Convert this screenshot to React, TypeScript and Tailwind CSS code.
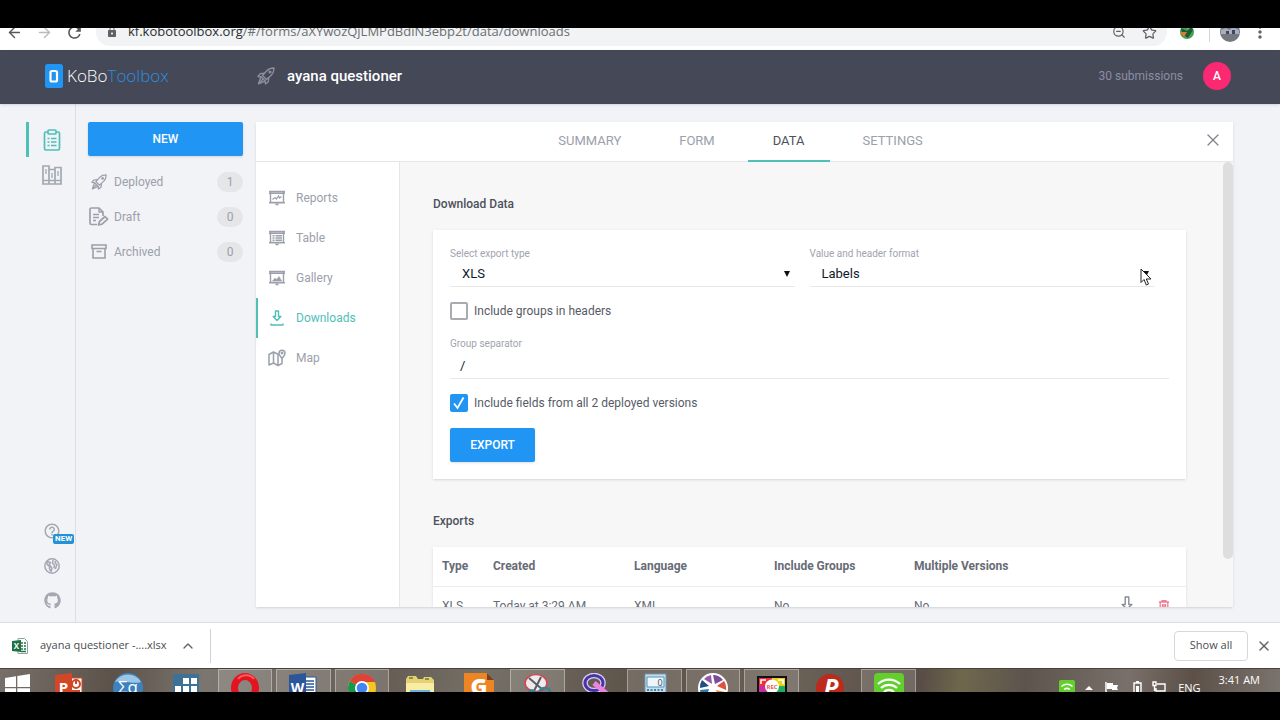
import type { ReactNode } from 'react';
import { ArrowLeft, ArrowRight, ChevronUp, Star, X, ZoomOut } from 'lucide-react';
import { FaGithub } from 'react-icons/fa';
import { MdHelpOutline, MdLock, MdMoreVert, MdRefresh } from 'react-icons/md';

const RocketIcon = ({ className = '' }: { className?: string }) => (
  <svg viewBox="0 0 18 18" className={className} fill="none" stroke="currentColor" strokeWidth="1.400" strokeLinejoin="round">
    <path d="M17 1c-3.500 0-5.500 1-7 2.500L5.500 8.500l4 4 5-4.500C16 6.500 17 4.500 17 1z" />
    <path d="M7.500 6.200L3 6.800 1 9.500l3 .3-2.500 7L8.200 14l.3 3 2.700-2 .6-4.500" />
    <path d="M4 9.800L8.200 14M1.500 16.800l4.200-4.300" />
    <circle cx="13" cy="5" r=".9" />
  </svg>
);

const ClipboardIcon = () => (
  <svg viewBox="0 0 18 22" className="w-[18px] h-[22px]" fill="none" stroke="currentColor" strokeWidth="1.700">
    <rect x="1.500" y="3" width="15" height="18" rx="1.500" />
    <rect x="5" y="1" width="8" height="4" rx="1" fill="#f2f3f6" />
    <path d="M4.500 9.500h2M8 9.500h5.500M4.500 13h2M8 13h5.500M4.500 16.500h2M8 16.500h5.500" />
  </svg>
);

const LibraryIcon = () => (
  <svg viewBox="0 0 20 20" className="w-5 h-5" fill="none" stroke="currentColor" strokeWidth="1.700">
    <path d="M1 1h6v18H1zM7 4.500h6V19H7zM13 2.500h6V19h-6z" />
    <path d="M4 4v5M10 8v5M16 6v5M1 15.500h18" strokeWidth="1.300" />
  </svg>
);

const DraftIcon = () => (
  <svg viewBox="0 0 20 19" className="w-5 h-[19px]" fill="none" stroke="currentColor" strokeWidth="1.700" strokeLinejoin="round">
    <path d="M8 17.500H2.500c-.8 0-1.500-.6-1.500-1.500V2.500C1 1.600 1.600 1 2.500 1H10l4 4v4" />
    <path d="M10 1v4h4M4 7.500h6M4 10.500h6M4 13.500h3" strokeWidth="1.400" />
    <path d="M9.500 18l1-3.500 5.500-5 2.600 2.600-5.600 5z" />
  </svg>
);

const ArchiveIcon = () => (
  <svg viewBox="0 0 16 15" className="w-4 h-[15px]" fill="none" stroke="currentColor" strokeWidth="1.600">
    <path d="M1 1h14v3.500H1zM2 4.500V14h12V4.500M5.500 7.500h5" />
  </svg>
);

const BoardIcon = ({ children }: { children: ReactNode }) => (
  <svg viewBox="0 0 16 16" className="w-4 h-4" fill="none" stroke="currentColor" strokeWidth="1.400">
    <path d="M0 1.500h16M0 3.200h16" strokeWidth="1.500" />
    <path d="M1.500 2v10.500h13V2M0 12.700h16M6.500 14.500h3" />
    {children}
  </svg>
);

const DownloadIcon = () => (
  <svg viewBox="0 0 14 17" className="w-[14px] h-[17px]" fill="none" stroke="currentColor" strokeWidth="1.400" strokeLinejoin="round">
    <path d="M5.500 1h3v5.500h2.300L7 10.500 3.200 6.500h2.300z" />
    <path d="M1 13.500V15h12v-1.500" />
  </svg>
);

const MapIcon = () => (
  <svg viewBox="0 0 18 18" className="w-[18px] h-[18px]" fill="none" stroke="currentColor" strokeWidth="1.500" strokeLinejoin="round">
    <path d="M10.500 4.500L9.500 5 5.500 3 1 5.500V16l4.500-2 4.500 2.500 4-2V10M5.500 3v11M10 5v11" />
    <path d="M14 9.500c-1.600-2.200-3-3.600-3-5.300a3 3 0 016 0c0 1.700-1.400 3.100-3 5.300z" fill="white" />
    <circle cx="14" cy="4" r=".7" />
  </svg>
);

const GlobeIcon = () => (
  <svg viewBox="0 0 16 16" className="w-4 h-4" fill="none" stroke="currentColor" strokeWidth="1.500" strokeLinejoin="round">
    <circle cx="8" cy="8" r="7.200" />
    <path d="M3 3.500v3l2.500 2V11L7 13.500l1-3L6.500 8 5 6.500l1.500-2zM9 2l-.5 3.500 2 1.500-.5 2.500 1.500 1 1.500-4-2-1.500.5-2" />
  </svg>
);

const ExcelIcon = () => (
  <svg viewBox="0 0 16 16" className="w-4 h-4">
    <path d="M6 .5h6.500l3 3V15.500H6z" fill="#fff" stroke="#8aa898" />
    <path d="M9 5h2M12 5h2M9 8h2M12 8h2M9 11h2M12 11h2M9 13.500h5" stroke="#227447" strokeWidth="1.300" />
    <path d="M0 3l9-1v12l-9-1z" fill="#1e7145" />
    <text x="4.500" y="11" textAnchor="middle" fontSize="8" fontWeight="700" fill="#fff">X</text>
  </svg>
);

const railLinks = [
  { name: 'Projects', icon: <ClipboardIcon />, active: true },
  { name: 'Library', icon: <LibraryIcon />, active: false }
];

const formGroups = [
  { name: 'Deployed', count: 1, icon: <RocketIcon className="w-4 h-4" /> },
  { name: 'Draft', count: 0, icon: <DraftIcon /> },
  { name: 'Archived', count: 0, icon: <ArchiveIcon /> }
];

const tabs = ['SUMMARY', 'FORM', 'DATA', 'SETTINGS'];

const dataViews = [
  {
    name: 'Reports',
    icon: <BoardIcon><path d="M3.500 9.500L6 7.500l1.500 1.500L9.500 6l1 2 2-1.500" strokeWidth="1.200" /></BoardIcon>
  },
  {
    name: 'Table',
    icon: <BoardIcon><path d="M3.500 5.700h2M6.500 5.700h6.500M3.500 8h2M6.500 8h6.500M3.500 10.300h2M6.500 10.300h6.500" /></BoardIcon>
  },
  {
    name: 'Gallery',
    icon: <BoardIcon><path d="M3.500 11l2.500-3 1.500 1.500L10 6.500l2.800 4.500z" fill="currentColor" strokeWidth=".5" /></BoardIcon>
  },
  { name: 'Downloads', icon: <DownloadIcon /> },
  { name: 'Map', icon: <MapIcon /> }
];

const taskbarApps: { name: string; open: boolean; icon: ReactNode }[] = [
  {
    name: 'PowerPoint',
    open: false,
    icon: (
      <>
        <path d="M14 5h14v20H14z" fill="#fff" stroke="#d24726" />
        <circle cx="22" cy="11" r="4" fill="none" stroke="#d24726" strokeWidth="2" />
        <path d="M22 11V6M17 18h9M17 21h9" stroke="#d24726" strokeWidth="2" />
        <path d="M1 2l17-2v30L1 28z" fill="#d24726" />
        <text x="9.500" y="20" textAnchor="middle" fontSize="15" fontWeight="700" fill="#fff">P</text>
      </>
    )
  },
  {
    name: 'Statistics',
    open: false,
    icon: (
      <>
        <circle cx="15" cy="15" r="15" fill="#3d82bd" />
        <path d="M2 9a15 15 0 0126 0C20 12 10 6 2 9z" fill="#9cc6e6" />
        <text x="15" y="20" textAnchor="middle" fontSize="17" fill="#fff">Σα</text>
      </>
    )
  },
  {
    name: 'Metro apps',
    open: false,
    icon: (
      <>
        <path d="M2 1h26v28H2z" fill="#3e7196" />
        <path d="M12 5h6v6h-6zM20 5h6v6h-6zM4 13h6v6H4zM12 13h6v6h-6zM20 13h6v6h-6z" fill="#fff" />
      </>
    )
  },
  {
    name: 'Opera',
    open: true,
    icon: (
      <>
        <ellipse cx="15" cy="15" rx="10.500" ry="11.500" fill="none" stroke="#e3131f" strokeWidth="7" />
        <path d="M8 6c4-5 12-5 16 0" fill="none" stroke="#ff5a60" strokeWidth="2" />
      </>
    )
  },
  {
    name: 'Word',
    open: true,
    icon: (
      <>
        <path d="M14 4h14v22H14z" fill="#fff" stroke="#2b579a" />
        <path d="M17 8h9M17 11h9M17 14h9M17 17h9M17 20h9" stroke="#2b579a" strokeWidth="1.500" />
        <path d="M1 2l17-2v30L1 28z" fill="#2b579a" />
        <text x="9.500" y="20" textAnchor="middle" fontSize="14" fontWeight="700" fill="#fff">W</text>
      </>
    )
  },
  {
    name: 'Chrome',
    open: true,
    icon: (
      <>
        <circle cx="15" cy="15" r="14" fill="#f6c522" />
        <path d="M15 15L2.900 8A14 14 0 0014 29z" fill="#17984f" />
        <path d="M2.900 8A14 14 0 0128 9H15v6z" fill="#db4437" />
        <circle cx="15" cy="15" r="7" fill="#fff" />
        <circle cx="15" cy="15" r="5.300" fill="#4285f4" />
      </>
    )
  },
  {
    name: 'Explorer',
    open: false,
    icon: (
      <>
        <path d="M1 6l2-3h8l2 3h5l1-2h7l3 3v22H1z" fill="#e7cf73" />
        <path d="M1 10h28v18H1z" fill="#f7eda5" />
        <path d="M4 5h4M20 6h4" stroke="#4b8a3c" strokeWidth="1.500" />
        <path d="M5 17h20v10H5z" fill="#69b4dc" />
      </>
    )
  },
  {
    name: 'Foxit Reader',
    open: false,
    icon: (
      <>
        <path d="M0 0h23l7 7v23H0z" fill="#ee8523" />
        <path d="M23 0l7 7h-7z" fill="#74412a" />
        <text x="15" y="22" textAnchor="middle" fontSize="23" fontWeight="900" fill="#fff">G</text>
      </>
    )
  },
  {
    name: 'Snipping Tool',
    open: true,
    icon: (
      <>
        <ellipse cx="13" cy="10" rx="11" ry="8.500" fill="#efe9eb" stroke="#ce4b54" strokeWidth="1.700" />
        <path d="M6 5l14 12M18 4l-8 16" stroke="#565d66" strokeWidth="2" />
        <ellipse cx="22" cy="18" rx="5" ry="3" fill="none" stroke="#3c8093" strokeWidth="2.500" />
        <circle cx="9" cy="21" r="3.500" fill="none" stroke="#3c8093" strokeWidth="2.500" />
      </>
    )
  },
  {
    name: 'Q viewer',
    open: false,
    icon: (
      <>
        <ellipse cx="13" cy="10" rx="9" ry="7.500" fill="none" stroke="#d9cef3" strokeWidth="5.500" />
        <ellipse cx="13" cy="10" rx="9" ry="7.500" fill="none" stroke="#4a35a8" strokeWidth="3" />
        <path d="M13 10l13 11" stroke="#ec83e0" strokeWidth="5" />
      </>
    )
  },
  {
    name: 'Calculator',
    open: true,
    icon: (
      <>
        <path d="M5 1h21v29H5z" fill="#c4deec" stroke="#6d9bb8" />
        <path d="M7 4h17v10H7z" fill="#edf6fb" stroke="#5a91b5" />
        <text x="20" y="13" textAnchor="middle" fontSize="9" fill="#334e63">0</text>
        <path d="M7 17h17M7 21h17" stroke="#4b81a6" strokeWidth="2" strokeDasharray="2 1.500" />
      </>
    )
  },
  {
    name: 'Photo viewer',
    open: true,
    icon: (
      <>
        <circle cx="15" cy="15" r="15" fill="#fff" />
        <path d="M15 2A13 13 0 0125 7l-8 4z" fill="#7b4b9e" />
        <path d="M26 8a13 13 0 012 9l-9-4z" fill="#d95340" />
        <path d="M13 2l1 9-8-5A13 13 0 0113 2z" fill="#955aa4" />
        <path d="M4 7l7 6-9 2A13 13 0 014 7z" fill="#234f80" />
        <path d="M2 17l9-1-3 10A13 13 0 012 17z" fill="#2e7dab" />
        <path d="M27 19l-9-2 3 9A13 13 0 0027 19z" fill="#e6903b" />
        <path d="M10 27l5-8 4 8A13 13 0 0110 27z" fill="#3c9e67" />
      </>
    )
  },
  {
    name: 'Screen recorder',
    open: true,
    icon: (
      <>
        <path d="M0 3h30v25H0z" fill="#111" />
        <path d="M2 5h13v8H2z" fill="#ec2e3f" />
        <path d="M15 5h13v8H15z" fill="#e8d21d" />
        <path d="M2 13h13v13H2z" fill="#c72da1" />
        <path d="M15 13h13v13H15z" fill="#1fae5e" />
        <path d="M4 11V7h5M21 7h5v4" fill="none" stroke="#fff" strokeWidth="1.500" />
        <circle cx="15" cy="13.500" r="7" fill="#fff" />
        <text x="15" y="16" textAnchor="middle" fontSize="6" fontWeight="700" fill="#e0604f">REC</text>
      </>
    )
  },
  {
    name: 'Psiphon',
    open: false,
    icon: (
      <>
        <circle cx="15" cy="15" r="14" fill="#bd2a1d" />
        <text x="16" y="23" textAnchor="middle" fontSize="24" fontWeight="700" fontStyle="italic" fill="#fff">P</text>
      </>
    )
  },
  {
    name: 'Wifi hotspot',
    open: true,
    icon: (
      <>
        <rect width="30" height="30" rx="4" fill="#62cf2c" />
        <path d="M4 11a16 16 0 0122 0M7 15a12 12 0 0116 0M10 19a7 7 0 0110 0" fill="none" stroke="#fff" strokeWidth="2.300" />
      </>
    )
  }
];

const BrowserToolbar = () => (
  <div className="h-[22px] shrink-0 overflow-hidden bg-white flex items-end font-['Open_Sans','Noto_Sans',sans-serif]">
    <div className="h-9 flex-1 shrink-0 flex items-center">
      <button aria-label="Back" className="ml-1.5 text-[#55585c]"><ArrowLeft size={17} /></button>
      <button aria-label="Forward" className="ml-[13px] text-[#b9bbbe]"><ArrowRight size={17} /></button>
      <button aria-label="Reload" className="ml-3 text-[#55585c]"><MdRefresh size={19} /></button>
      <div className="ml-3 flex-1 h-7 rounded-full bg-[#f1f3f4] flex items-center pl-2.5 pr-2.5">
        <MdLock size={12} className="text-[#5f6368]" />
        <span className="ml-2.5 text-[13px] text-[#6b6e72] whitespace-nowrap">
          <span className="text-[#2b2d30]">kf.kobotoolbox.org</span>/#/forms/aXYwozQjLMPdBdiN3ebp2t/data/downloads
        </span>
        <button aria-label="Zoom" className="ml-auto text-[#5f6368]"><ZoomOut size={14} /></button>
        <button aria-label="Bookmark" className="ml-4 text-[#5f6368]"><Star size={15} /></button>
      </div>
      <svg viewBox="0 0 16 16" className="ml-3 w-4 h-4">
        <circle cx="8" cy="8" r="7" fill="#4aa34a" />
        <path d="M2 4l6 3 4-5 2 4-5 8-6-4z" fill="#1c5c39" />
        <path d="M1 8h7l-3 5z" fill="#de7b30" />
        <path d="M8 2h4L9 6z" fill="#78b2e5" />
      </svg>
      <div className="ml-3.5 w-px h-5 bg-gray-300"></div>
      <svg viewBox="0 0 20 20" className="ml-2.5 w-5 h-5">
        <circle cx="10" cy="10" r="10" fill="#75797f" />
        <path d="M1 8l5-2 3 2 4-3 6 3v4H1z" fill="#a8aec0" />
        <path d="M6 9h3v3H6zM12 8h3v4h-3z" fill="#3f4660" />
      </svg>
      <button aria-label="Menu" className="ml-2.5 mr-2.5 text-[#5f6368]"><MdMoreVert size={20} /></button>
    </div>
  </div>
);

const AppHeader = () => (
  <header className="relative z-10 h-[54px] shrink-0 bg-[#444857] flex items-center pb-0.5 shadow">
    <a href="#/" aria-label="KoBoToolbox" className="ml-[45px] w-[212px] flex items-center">
      <svg viewBox="0 0 18 24" className="w-[18px] h-6">
        <rect width="18" height="24" rx="2.500" fill="#2095f3" />
        <rect x="5.500" y="7" width="6.500" height="10.500" rx="1.500" fill="none" stroke="#fff" strokeWidth="2.200" />
      </svg>
      <span className="ml-1 text-[17px] font-['Open_Sans','Noto_Sans',sans-serif] font-light text-white">
        KoBo<span className="text-[#2b8fe0]">Toolbox</span>
      </span>
    </a>
    <RocketIcon className="w-[18px] h-[18px] text-[#8a8e9e]" />
    <h1 className="ml-3 text-[15px] leading-5 font-medium text-white">ayana questioner</h1>
    <span className="ml-auto text-xs text-[#8b8fa3]">30 submissions</span>
    <button className="ml-5 mr-[49px] size-7 rounded-full bg-[#fc2872] text-white text-xs font-medium">A</button>
  </header>
);

const IconRail = () => (
  <nav className="w-[76px] shrink-0 border-r border-[#dcdee3] flex flex-col pt-[18px] pb-[13px] text-[#a3a8b3]">
    {railLinks.map((link) => (
      <a
        key={link.name}
        href="#/"
        aria-label={link.name}
        className={`ml-[26px] h-[35px] flex items-center justify-center border-l-[3px] ${link.active ? 'border-[#4fc0b8] text-[#4fc0b8]' : 'border-transparent'}`}
      >
        {link.icon}
      </a>
    ))}
    <div className="mt-auto ml-[43px] flex flex-col items-start gap-[18px]">
      <button aria-label="Help" className="relative">
        <MdHelpOutline size={18} />
        <span className="absolute left-2.5 top-3 px-0.5 bg-[#2391d3] rounded-xs text-white text-[8px] leading-[10px] font-bold">NEW</span>
      </button>
      <a href="#/source" aria-label="Website" className="ml-px"><GlobeIcon /></a>
      <a href="#/github" aria-label="GitHub" className="ml-px"><FaGithub size={17} /></a>
    </div>
  </nav>
);

const FormsSidebar = () => (
  <aside className="w-[180px] shrink-0 pl-3 pr-[13px] pt-[18px] text-xs text-[#9ba0ab]">
    <button className="w-full h-[34px] rounded-xs bg-[#2095f3] shadow text-white text-xs font-medium">NEW</button>
    <ul className="mt-2">
      {formGroups.map((group) => (
        <li key={group.name} className="h-[35px] flex items-center">
          <span className="w-[22px] flex justify-center">{group.icon}</span>
          <span className="ml-1">{group.name}</span>
          <span className="ml-auto w-[26px] h-5 rounded-full bg-[#e5e6e8] flex items-center justify-center">{group.count}</span>
        </li>
      ))}
    </ul>
  </aside>
);

const SelectField = ({ id, label, value }: { id: string; label: string; value: string }) => (
  <div className="w-1/2 pr-[15px]">
    <label htmlFor={id} className="block text-[10px] leading-4 text-[#a0a4ae]">{label}</label>
    <div className="relative">
      <select id={id} className="appearance-none block w-full h-[25px] pl-3 border-b border-[#e8e8ea] bg-transparent text-[13px] text-gray-900 outline-none">
        <option>{value}</option>
      </select>
      <svg viewBox="0 0 6 6" className="absolute right-[5px] top-[9px] w-1.5 h-1.5 pointer-events-none">
        <path d="M0 0h6L3 6z" fill="#111" />
      </svg>
    </div>
  </div>
);

const CheckField = ({ id, label, checked }: { id: string; label: string; checked: boolean }) => (
  <div className="flex items-center h-[18px] text-xs text-[#575b66]">
    <span className="relative size-[18px]">
      <input
        id={id}
        type="checkbox"
        defaultChecked={checked}
        className="peer block appearance-none size-[18px] rounded-xs border-2 border-[#a9abb0] checked:bg-[#2095f3] checked:border-[#2095f3]"
      />
      <svg viewBox="0 0 18 18" className="absolute inset-0 hidden peer-checked:block pointer-events-none" fill="none" stroke="white" strokeWidth="1.800">
        <path d="M4 9.500L7.500 14 13.500 3.500" />
      </svg>
    </span>
    <label htmlFor={id} className="ml-1.5">{label}</label>
  </div>
);

const ExportForm = () => (
  <form className="mt-4 px-[17px] pt-4 pb-[17px] bg-white shadow" onSubmit={(e) => e.preventDefault()}>
    <div className="flex">
      <SelectField id="export-type" label="Select export type" value="XLS" />
      <SelectField id="header-format" label="Value and header format" value="Labels" />
    </div>
    <div className="mt-[15px]">
      <CheckField id="include-groups" label="Include groups in headers" checked={false} />
    </div>
    <label htmlFor="separator" className="mt-4 block text-[10px] leading-4 text-[#a0a4ae]">Group separator</label>
    <input
      id="separator"
      defaultValue="/"
      className="block w-full h-[27px] pl-2.5 border-b border-[#e8e8ea] text-[13px] text-gray-900 outline-none"
    />
    <div className="mt-[15px]">
      <CheckField id="all-versions" label="Include fields from all 2 deployed versions" checked />
    </div>
    <button className="mt-4 w-[85px] h-[34px] rounded-xs bg-[#2095f3] shadow text-white text-xs font-medium">EXPORT</button>
  </form>
);

const ExportsTable = () => (
  <table className="mt-4 w-full table-fixed bg-white shadow text-left text-xs text-[#676b76]">
    <thead>
      <tr className="h-[39px] border-b border-[#ececee]">
        <th className="w-[51px] pl-[9px] font-bold">Type</th>
        <th className="w-[141px] pl-[9px] font-bold">Created</th>
        <th className="w-[140px] pl-[9px] font-bold">Language</th>
        <th className="w-[140px] pl-[9px] font-bold">Include Groups</th>
        <th className="pl-[9px] font-bold">Multiple Versions</th>
        <th className="w-[88px]"></th>
      </tr>
    </thead>
    <tbody>
      <tr className="h-[39px]">
        <td className="pl-[9px]">XLS</td>
        <td className="pl-[9px]">Today at 3:29 AM</td>
        <td className="pl-[9px]">XML</td>
        <td className="pl-[9px]">No</td>
        <td className="pl-[9px]">No</td>
        <td>
          <div className="flex items-center justify-end gap-[26px] pr-[17px]">
            <button aria-label="Download export" className="pb-1">
              <svg viewBox="0 0 12 16" className="block w-3 h-4" fill="none" stroke="#888c94" strokeWidth="1.400" strokeLinejoin="round">
                <path d="M4.200 1h3.600v7.500h3L6 13 1.200 8.500h3z" />
              </svg>
            </button>
            <button aria-label="Delete export">
              <svg viewBox="0 0 10 12" className="block w-2.5 h-3" fill="none" stroke="#ef7f92" strokeWidth="1.300">
                <path d="M0 2h10M3 1.800V.7h4v1.100M1.200 2v9.300h7.600V2M3.500 4v6M5 4v6M6.500 4v6" />
              </svg>
            </button>
          </div>
        </td>
      </tr>
    </tbody>
  </table>
);

const ProjectPanel = () => (
  <main className="relative flex-1 mt-[18px] mb-[15px] mr-[47px] bg-white shadow flex flex-col min-w-0 overflow-hidden">
    <div className="h-10 shrink-0 border-b border-[#e6e7e9] grid grid-cols-[1fr_auto_1fr]">
      <nav className="col-start-2 mr-2 flex gap-2">
        {tabs.map((tab) => (
          <a
            key={tab}
            href="#/"
            className={`px-[25px] h-10 flex items-center text-[13px] border-b-2 ${tab === 'DATA' ? 'border-[#4fc0b8] text-[#4d515c]' : 'border-transparent text-[#9ba0ab]'}`}
          >
            {tab}
          </a>
        ))}
      </nav>
      <button aria-label="Close" className="justify-self-end mr-2.5 pb-1 text-[#808389]"><X size={20} strokeWidth={1.5} /></button>
    </div>
    <div className="flex-1 min-h-0 flex">
      <nav className="w-36 shrink-0 pt-4 border-r border-[#e6e7e9] text-xs text-[#9ba0ab]">
        {dataViews.map((view) => (
          <a
            key={view.name}
            href="#/"
            className={`h-10 flex items-center border-l-2 pl-2.5 ${view.name === 'Downloads' ? 'border-[#4fc0b8] text-[#4fc0b8]' : 'border-transparent'}`}
          >
            <span className="w-[18px] flex justify-center">{view.icon}</span>
            <span className="ml-2.5">{view.name}</span>
          </a>
        ))}
      </nav>
      <div className="flex-1 min-w-0 bg-[#f7f7f7] pl-[33px] pr-[37px] pt-8 overflow-hidden text-[#4d515c]">
        <h2 className="text-xs leading-5 font-medium">Download Data</h2>
        <ExportForm />
        <h2 className="mt-8 text-xs leading-5 font-medium">Exports</h2>
        <ExportsTable />
      </div>
      <div className="w-2.5 shrink-0 bg-[#f7f7f7] pb-12">
        <div className="h-full rounded-full bg-[#dedede]"></div>
      </div>
    </div>
  </main>
);

const DownloadShelf = () => (
  <div className="h-[46px] shrink-0 bg-white border-t border-[#dcdde0] flex items-center font-['Open_Sans','Noto_Sans',sans-serif] text-[11px] text-[#4a4c50]">
    <div className="h-[34px] w-[211px] pl-3 border-r border-[#cfd1d4] flex items-center">
      <ExcelIcon />
      <span className="ml-3">ayana questioner -....xlsx</span>
      <button aria-label="File options" className="ml-auto mr-3.5 text-[#5f6368]"><ChevronUp size={16} /></button>
    </div>
    <button className="ml-auto h-[30px] w-[74px] rounded border border-[#d5d7da]">Show all</button>
    <button aria-label="Close downloads" className="ml-2 mr-2 text-[#5f6368]"><X size={16} /></button>
  </div>
);

const Taskbar = () => (
  <div className="h-6 shrink-0 overflow-hidden border-t border-[#4a413b] bg-[linear-gradient(100deg,#77706a,#5c5249_9%,#7b766f_16%,#665d54_30%,#757067_38%,#5c5248_50%,#6a6157_62%,#594e47_72%,#6f674c_75%,#5d544e_80%,#7a706a_88%,#5c5048_93%,#7b746e)] font-['Open_Sans','Noto_Sans',sans-serif] text-white">
    <div className="h-[38px] flex items-center">
      <button aria-label="Start" className="w-10 pl-[5px]">
        <svg viewBox="0 0 25 28" className="w-[25px] h-7">
          <path d="M0 4l11-1.700V13H0zM12.300 2L25 0v13H12.300zM0 14.300h11V25L0 23zM12.300 14.300H25V28l-12.700-2z" fill="#fff" />
        </svg>
      </button>
      <div className="w-[878px] h-full grid grid-cols-15">
        {taskbarApps.map((app) => (
          <button
            key={app.name}
            aria-label={app.name}
            className={`mx-0.5 flex items-center justify-center border ${app.open ? 'bg-white/15 border-white/35' : 'border-transparent'}`}
          >
            <svg viewBox="0 0 30 30" className="w-[30px] h-[30px]">{app.icon}</svg>
          </button>
        ))}
      </div>
      <div className="ml-auto h-full mr-5 flex items-center">
        <svg viewBox="0 0 16 16" className="w-4 h-4">
          <rect width="16" height="16" rx="2" fill="#62cf2c" />
          <path d="M2.500 6.500a8 8 0 0111 0M5 9.500a5 5 0 016 0M8 12v2" fill="none" stroke="#fff" strokeWidth="1.500" />
        </svg>
        <svg viewBox="0 0 8 4" className="ml-2.5 w-2 h-1"><path d="M0 4l4-4 4 4z" fill="#fff" /></svg>
        <svg viewBox="0 0 14 14" className="ml-3 w-3.5 h-3.5">
          <path d="M1 1v13" stroke="#fff" strokeWidth="1.500" />
          <path d="M2 2h6v2h5l-1 3 1 2H7V8H2z" fill="#fff" />
        </svg>
        <svg viewBox="0 0 9 14" className="ml-3.5 w-[9px] h-3.5">
          <path d="M1 2h7v11.500H1zM3 .7h3" fill="none" stroke="#fff" strokeWidth="1.400" />
          <path d="M3 5h3v7H3z" fill="#fff" />
        </svg>
        <svg viewBox="0 0 14 14" className="ml-2.5 w-3.5 h-3.5" fill="none" stroke="#fff" strokeWidth="1.400">
          <path d="M5 3h8v7H4V7M7 12.500h5M1 1h3v3.500H1zM2.500 5v5" />
        </svg>
        <span className="ml-3 text-[11px]">ENG</span>
        <span className="ml-[18px] pt-[3px] self-start text-[11px] leading-4">3:41 AM</span>
      </div>
    </div>
  </div>
);

const App = () => {
  return (
    <div className="relative h-screen bg-black py-7 flex flex-col overflow-hidden font-[Roboto,sans-serif]">
      <BrowserToolbar />
      <AppHeader />
      <div className="flex-1 min-h-0 flex bg-[#f2f3f6]">
        <IconRail />
        <FormsSidebar />
        <ProjectPanel />
      </div>
      <DownloadShelf />
      <Taskbar />
      <svg viewBox="0 0 12 18" className="absolute left-[1140px] top-[268px] w-3 h-[18px] pointer-events-none">
        <path d="M1 1v13.500l3-3 2.300 5.500 2.200-1L6.300 11H11z" fill="#fff" stroke="#222" />
      </svg>
    </div>
  );
};

export default App;
